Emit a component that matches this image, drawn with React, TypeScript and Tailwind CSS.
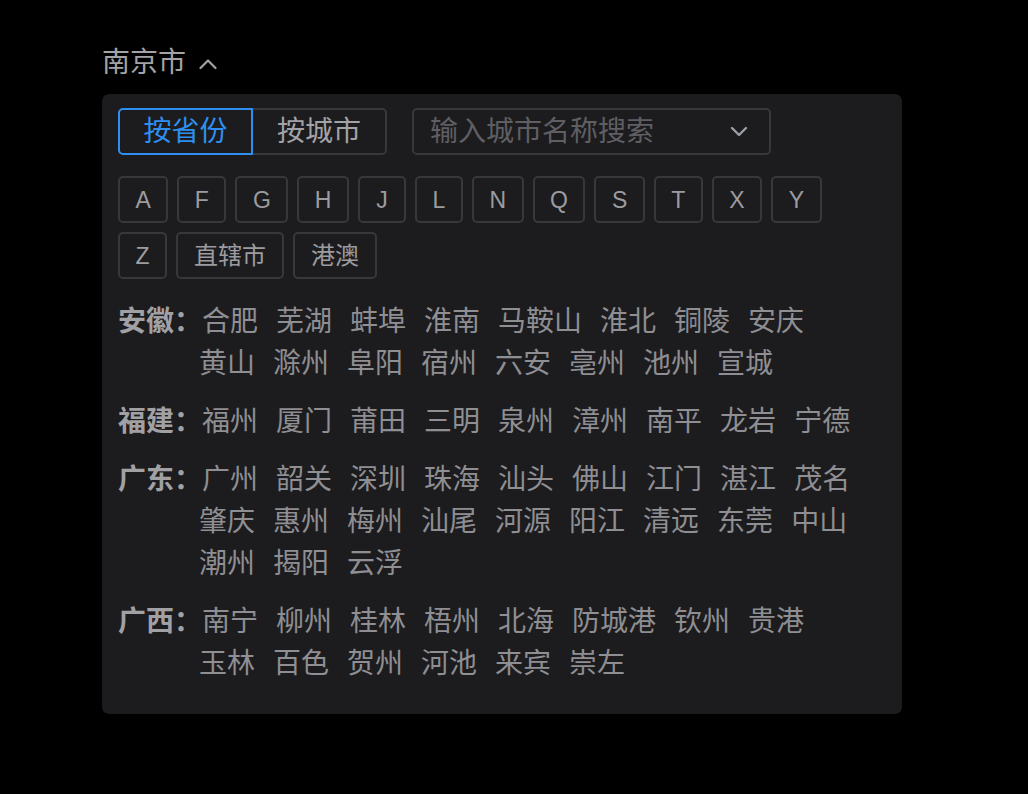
import React from "react";

const letters = ["A", "F", "G", "H", "J", "L", "N", "Q", "S", "T", "X", "Y", "Z"];
const groups = ["直辖市", "港澳"];

const provinces: { name: string; cities: string[] }[] = [
  {
    name: "安徽",
    cities: ["合肥", "芜湖", "蚌埠", "淮南", "马鞍山", "淮北", "铜陵", "安庆", "黄山", "滁州", "阜阳", "宿州", "六安", "亳州", "池州", "宣城"],
  },
  {
    name: "福建",
    cities: ["福州", "厦门", "莆田", "三明", "泉州", "漳州", "南平", "龙岩", "宁德"],
  },
  {
    name: "广东",
    cities: ["广州", "韶关", "深圳", "珠海", "汕头", "佛山", "江门", "湛江", "茂名", "肇庆", "惠州", "梅州", "汕尾", "河源", "阳江", "清远", "东莞", "中山", "潮州", "揭阳", "云浮"],
  },
  {
    name: "广西",
    cities: ["南宁", "柳州", "桂林", "梧州", "北海", "防城港", "钦州", "贵港", "玉林", "百色", "贺州", "河池", "来宾", "崇左"],
  },
];

function ChevronUp() {
  return (
    <svg width="18" height="12" viewBox="0 0 18 12" fill="none" className="ml-[13px] mt-[2px]">
      <path d="M1.5 10 L9 2.5 L16.5 10" stroke="#a3a3a7" strokeWidth="2.2" strokeLinecap="round" strokeLinejoin="round" />
    </svg>
  );
}

function ChevronDown() {
  return (
    <svg width="18" height="11" viewBox="0 0 18 11" fill="none">
      <path d="M2 2 L9 9 L16 2" stroke="#9c9ea8" strokeWidth="2.4" strokeLinecap="round" strokeLinejoin="round" />
    </svg>
  );
}

export default function App() {
  return (
    <div className="min-h-screen bg-black font-['Liberation_Sans','Noto_Sans_CJK_SC',sans-serif]">
      <div className="pl-[102px] pt-[42px]">
        <div className="flex h-[42px] items-center text-[28px] text-[#a3a3a7]">
          <span>南京市</span>
          <ChevronUp />
        </div>

        <div className="mt-[10px] w-[800px] rounded-[7px] bg-[#1c1c1e] px-4 pb-[13px] pt-[14px]">
          {/* mode tabs and search */}
          <div className="flex items-center">
            <div className="flex h-[47px] text-[28px]">
              <button className="flex w-[135px] items-center justify-center rounded-l-[5px] border-2 border-[#2f8ff0] pt-[1px] text-[#2f8ff0]">
                按省份
              </button>
              <button className="flex w-[134px] items-center justify-center rounded-r-[5px] border-2 border-l-0 border-[#38383b] pt-[1px] text-[#a3a3a7]">
                按城市
              </button>
            </div>
            <div className="ml-[25px] flex h-[47px] w-[359px] items-center justify-between rounded-[5px] border-2 border-[#38383b] pl-[16px] pr-[21px]">
              <span className="pt-[1px] text-[28px] text-[#5f5f63]">输入城市名称搜索</span>
              <ChevronDown />
            </div>
          </div>

          {/* initial letter index */}
          <div className="mt-[21px] flex w-[720px] flex-wrap gap-[9px]">
            {letters.map((l) => (
              <button
                key={l}
                className="flex h-[47px] min-w-[48px] items-center justify-center rounded-[5px] border-2 border-[#38383b] px-[15.5px] pt-[1px] text-[23px] text-[#9c9ca0]"
              >
                {l}
              </button>
            ))}
            {groups.map((g) => (
              <button
                key={g}
                className="flex h-[47px] items-center justify-center rounded-[5px] border-2 border-[#38383b] px-4 pt-[1px] text-[24px] text-[#9c9ca0]"
              >
                {g}
              </button>
            ))}
          </div>

          {/* provinces with their cities */}
          <div className="mt-[22px]">
            {provinces.map((p) => (
              <div key={p.name} className="mb-4 flex text-[28px] leading-[42px]">
                <div className="w-[81px] shrink-0 whitespace-nowrap font-semibold text-[#a1a1a5]">{p.name}：</div>
                <div className="flex w-[670px] flex-wrap gap-x-[18px]">
                  {p.cities.map((c, i) => (
                    <span key={c} className={i === 0 ? "ml-[3px] text-[#8e8e93]" : "text-[#8e8e93]"}>
                      {c}
                    </span>
                  ))}
                </div>
              </div>
            ))}
          </div>
        </div>
      </div>
    </div>
  );
}
